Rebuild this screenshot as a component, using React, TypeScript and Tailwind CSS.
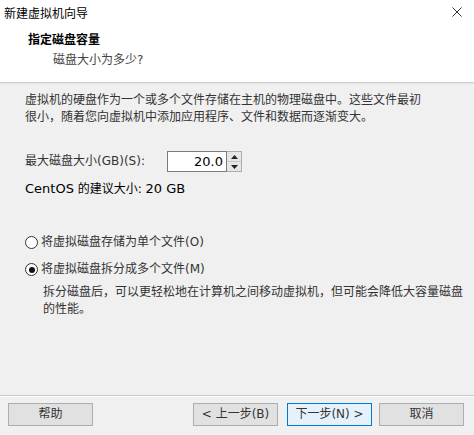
import { useState } from 'react'

const cjk = '"DejaVu Sans", "Noto Sans CJK SC", sans-serif'

function Radio({ checked, label, onClick }: { checked: boolean; label: string; onClick: () => void }) {
  return (
    <div className="flex items-center h-[17px] cursor-default" onClick={onClick}>
      <div className="w-[13px] h-[13px] rounded-full border border-[#333] bg-white flex items-center justify-center">
        {checked && <div className="w-[6px] h-[6px] rounded-full bg-[#111]" />}
      </div>
      <span className="ml-[3px] text-[#333]">{label}</span>
    </div>
  )
}

function Btn({ children, primary }: { children: React.ReactNode; primary?: boolean }) {
  return (
    <button
      className={
        'w-[85px] h-[23px] text-[12px] text-[#333] ' +
        (primary ? 'bg-[#e5f1fb] border border-[#0078d7]' : 'bg-[#e1e1e1] border border-[#adadad]')
      }
    >
      {children}
    </button>
  )
}

export default function App() {
  const [split, setSplit] = useState(true)
  const [size, setSize] = useState(20)

  return (
    <div
      className="w-[474px] h-[435px] bg-[#f0f0f0] flex flex-col overflow-hidden text-[12px] leading-[17px]"
      style={{ fontFamily: cjk }}
    >
      {/* header */}
      <div className="bg-white h-[82px] relative">
        <div className="pl-[4px] pt-[4px] text-[12px] text-black" style={{ fontFamily: '"Noto Sans CJK SC", sans-serif' }}>
          新建虚拟机向导
        </div>
        <svg className="absolute right-[12px] top-[7px]" width="10" height="10" viewBox="0 0 10 10">
          <path d="M0.5 0.5 L9.5 9.5 M9.5 0.5 L0.5 9.5" stroke="#333" strokeWidth="1" />
        </svg>
        <div className="pl-[28px] pt-[11px] font-bold text-[12px] text-black">指定磁盘容量</div>
        <div className="pl-[53px] pt-[3px] text-[#444]">磁盘大小为多少?</div>
      </div>
      <div className="h-px bg-[#d0d0d0]" />
      <div className="h-px bg-[#e4e4e4]" />

      {/* body */}
      <div className="flex-1 px-[25px] pt-[8px] text-[#333] whitespace-nowrap">
        <p>
          虚拟机的硬盘作为一个或多个文件存储在主机的物理磁盘中。这些文件最初
          <br />
          很小，随着您向虚拟机中添加应用程序、文件和数据而逐渐变大。
        </p>

        <div className="flex items-center mt-[25px]">
          <span className="w-[142px]">最大磁盘大小(GB)(S):</span>
          <div className="flex h-[21px]">
            <div className="w-[60px] border border-[#7a7a7a] bg-white text-right pr-[3px] leading-[19px] text-[13px] text-black">
              {size.toFixed(1)}
            </div>
            <div className="w-[15px] flex flex-col border-y border-r border-[#acacac] bg-[#e6e6e6]">
              <div className="flex-1 flex items-center justify-center border-b border-[#c8c8c8]" onClick={() => setSize(size + 1)}>
                <svg width="7" height="4" viewBox="0 0 7 4">
                  <path d="M0 4 L3.5 0 L7 4 Z" fill="#222" />
                </svg>
              </div>
              <div className="flex-1 flex items-center justify-center" onClick={() => setSize(Math.max(1, size - 1))}>
                <svg width="7" height="4" viewBox="0 0 7 4">
                  <path d="M0 0 L3.5 4 L7 0 Z" fill="#222" />
                </svg>
              </div>
            </div>
          </div>
        </div>

        <div className="mt-[8px] text-black">
          <span className="text-[13px]">CentOS</span> 的建议大小: <span className="text-[13px]">20 GB</span>
        </div>

        <div className="mt-[36px]">
          <Radio checked={!split} label="将虚拟磁盘存储为单个文件(O)" onClick={() => setSplit(false)} />
        </div>
        <div className="mt-[10px]">
          <Radio checked={split} label="将虚拟磁盘拆分成多个文件(M)" onClick={() => setSplit(true)} />
        </div>
        <p className="pl-[18px] mt-[6px]">
          拆分磁盘后，可以更轻松地在计算机之间移动虚拟机，但可能会降低大容量磁盘
          <br />
          的性能。
        </p>
      </div>

      {/* footer */}
      <div className="h-px bg-[#c9c9c9]" />
      <div className="h-px bg-white" />
      <div className="flex items-start pt-[6px] pl-[8px] pr-[10px] h-[38px]">
        <Btn>帮助</Btn>
        <div className="flex-1" />
        <Btn>&lt; 上一步(B)</Btn>
        <div className="w-[9px]" />
        <Btn primary>下一步(N) &gt;</Btn>
        <div className="w-[7px]" />
        <Btn>取消</Btn>
      </div>
    </div>
  )
}
